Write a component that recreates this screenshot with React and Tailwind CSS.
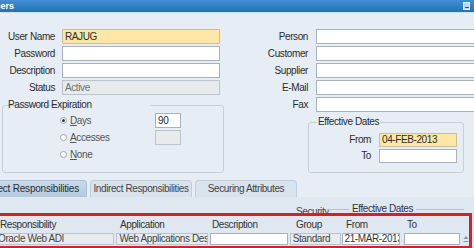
import React from 'react';

const tones = {
  white: 'bg-white border-[#a9b2bc]',
  yellow: 'bg-[#fce8a4] border-[#c8bf9c]',
  disabled: 'bg-[#e8ebee] border-[#bcc3ca] text-[#707070]',
};

const Field = ({ value = '', tone = 'white', className = '' }) => (
  <div className={`border px-[2px] overflow-hidden whitespace-nowrap ${tones[tone]} ${className}`}>
    {value}
  </div>
);

const Radio = ({ checked, label }) => (
  <div className="flex items-center w-[95px] shrink-0">
    <span className="w-[7px] h-[7px] rounded-full border border-[#9aa4ae] bg-white flex items-center justify-center">
      {checked && <span className="w-[3px] h-[3px] rounded-full bg-[#333]" />}
    </span>
    <span className="ml-[3px] text-[#555]">
      <span className="underline">{label[0]}</span>
      {label.slice(1)}
    </span>
  </div>
);

export default function App() {
  return (
    <div
      className="w-[474px] h-[248px] overflow-hidden bg-[#e7edf4] text-[10px] tracking-[-0.4px] leading-[12px] text-[#2c2c2c]"
      style={{ fontFamily: '"Liberation Sans", Arial, sans-serif' }}
    >
      {/* title bar */}
      <div className="h-[13px] bg-gradient-to-b from-[#3e90d6] to-[#2571b6] flex items-center justify-between border-b border-[#cfe0f0]">
        <span className="text-white font-bold text-[9px] -ml-[11px] tracking-normal">Users</span>
        <span className="w-[7px] h-[8px] mr-[4px] bg-[#bcd6ee] border border-[#e6f0fa] flex items-end justify-center pb-[1px]">
          <span className="w-[4px] h-[1px] bg-[#36597a]" />
        </span>
      </div>

      {/* form */}
      <div className="flex pt-[16px]">
        <div className="w-[234px] shrink-0">
          <div className="flex flex-col gap-[2px]">
            {[
              ['User Name', 'RAJUG', 'yellow'],
              ['Password', '', 'white'],
              ['Description', '', 'white'],
              ['Status', 'Active', 'disabled'],
            ].map(([l, v, t]) => (
              <div key={l} className="flex items-center gap-[7px]">
                <div className="w-[55px] text-right shrink-0">{l}</div>
                <Field value={v} tone={t} className="w-[158px] h-[15px] leading-[13px]" />
              </div>
            ))}
          </div>
          <fieldset className="mt-[4px] ml-[2px] w-[222px] border border-[#c7cfd8] rounded-[3px] pl-[57px] pb-[10px]">
            <legend className="ml-[4px] px-[1px] -translate-x-[57px] text-[#2c2c2c]">Password Expiration</legend>
            <div className="flex flex-col gap-[2px] pt-[2px]">
              <div className="flex items-center h-[15px]">
                <Radio checked label="Days" />
                <Field value="90" className="w-[26px] h-[15px] leading-[13px]" />
              </div>
              <div className="flex items-center h-[15px]">
                <Radio label="Accesses" />
                <Field tone="disabled" className="w-[26px] h-[15px]" />
              </div>
              <div className="flex items-center h-[15px]">
                <Radio label="None" />
              </div>
            </div>
          </fieldset>
        </div>

        <div className="flex-1 min-w-0">
          <div className="flex flex-col gap-[2px]">
            {['Person', 'Customer', 'Supplier', 'E-Mail', 'Fax'].map((l) => (
              <div key={l} className="flex items-center gap-[8px]">
                <div className="w-[74px] text-right shrink-0">{l}</div>
                <Field className="w-[170px] h-[15px] shrink-0" />
              </div>
            ))}
          </div>
          <fieldset className="mt-[4px] ml-[74px] w-[156px] border border-[#c7cfd8] rounded-[3px] pb-[9px]">
            <legend className="ml-[8px] px-[1px]">Effective Dates</legend>
            <div className="flex flex-col gap-[2px] pt-[5px]">
              <div className="flex items-center gap-[8px]">
                <div className="w-[62px] text-right">From</div>
                <Field value="04-FEB-2013" tone="yellow" className="w-[78px] h-[14px] leading-[12px]" />
              </div>
              <div className="flex items-center gap-[8px]">
                <div className="w-[62px] text-right">To</div>
                <Field className="w-[78px] h-[14px]" />
              </div>
            </div>
          </fieldset>
        </div>
      </div>

      {/* tabs */}
      <div className="flex gap-[3px] mt-[7px] h-[17px] items-end">
        <div className="-ml-[26px] w-[113px] h-[17px] shrink-0 rounded-t-[4px] bg-gradient-to-b from-[#c9daea] to-[#b3c9de] border border-b-0 border-[#a9bfd4] flex items-center justify-end pr-[7px] whitespace-nowrap tracking-[-0.2px] text-[#2c2c2c]">
          Direct Responsibilities
        </div>
        <div className="w-[102px] h-[17px] shrink-0 rounded-t-[4px] bg-[#d9e3ed] border border-b-0 border-[#bfcedd] flex items-center justify-center text-[#444]">
          Indirect Responsibilities
        </div>
        <div className="w-[102px] h-[17px] shrink-0 rounded-t-[4px] bg-[#d9e3ed] border border-b-0 border-[#bfcedd] flex items-center justify-center text-[#444]">
          Securing Attributes
        </div>
      </div>

      {/* tab panel */}
      <div className="bg-[#dfe7f0] h-[52px]">
        <div className="flex h-[16px]">
          <div className="w-[296px] shrink-0" />
          <div className="w-[31px] shrink-0 leading-[30px] h-[30px] whitespace-nowrap text-[#444]">Security</div>
          <div className="flex items-center h-[16px] pt-[8px] w-[137px]">
            <span className="w-[22px] h-px bg-[#b9c3cd]" />
            <span className="px-[3px] whitespace-nowrap text-[#333]">Effective Dates</span>
            <span className="flex-1 h-px bg-[#b9c3cd]" />
          </div>
        </div>
        <div className="relative z-10 -ml-[3px] w-[475px] h-[36px] border-[3px] border-[#d4202c] bg-[#dfe7f0]">
          <div className="flex h-[17px] items-end pb-[2px] text-[#333]">
            <div className="w-[115px] shrink-0">Responsibility</div>
            <div className="w-[96px] shrink-0 pl-[5px]">Application</div>
            <div className="w-[80px] shrink-0 pl-[1px]">Description</div>
            <div className="w-[52px] shrink-0 pl-[5px]">Group</div>
            <div className="w-[63px] shrink-0 pl-[3px]">From</div>
            <div className="shrink-0 pl-[1px]">To</div>
          </div>
          <div className="flex items-center h-[12px] text-[#333]">
            <Field value="Oracle Web ADI" tone="disabled" className="-ml-[4px] w-[119px] h-[12px] leading-[10px] !px-[1px] !text-[#444]" />
            <Field value="Web Applications Description" tone="disabled" className="ml-[2px] w-[92px] h-[12px] leading-[10px] !text-[#444]" />
            <Field className="ml-[2px] w-[78px] h-[12px]" />
            <Field value="Standard" tone="disabled" className="ml-[2px] w-[51px] h-[12px] leading-[10px] !text-[#444]" />
            <Field value="21-MAR-2013" className="ml-[1px] w-[59px] h-[12px] leading-[10px]" />
            <Field className="ml-[4px] w-[56px] h-[12px]" />
            <svg width="6" height="8" viewBox="0 0 6 8" className="ml-[3px]">
              <path d="M3 1 L5.5 4 L0.5 4 Z" fill="#8a949e" />
              <path d="M0.5 6.5 H5.5" stroke="#8a949e" strokeWidth="1" />
            </svg>
          </div>
        </div>
      </div>
    </div>
  );
}
